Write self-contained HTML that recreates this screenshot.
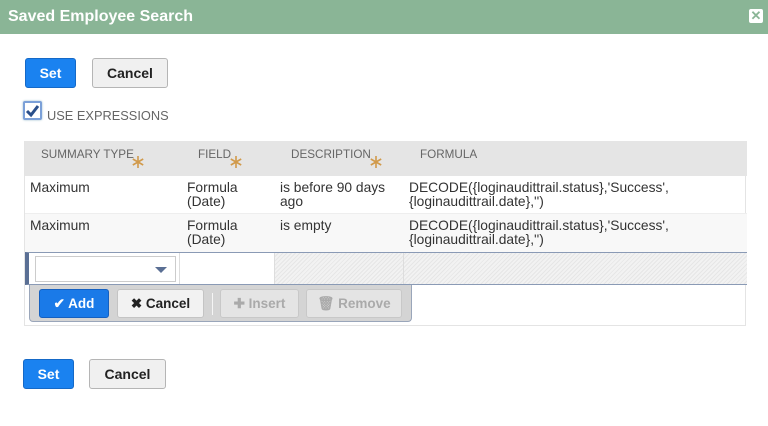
<!DOCTYPE html>
<html><head><style>
*{margin:0;padding:0;box-sizing:border-box}
body{width:768px;height:426px;background:#fff;font-family:"Liberation Sans",Arial,sans-serif;position:relative;overflow:hidden;color:#333}
.hdr{position:absolute;left:0;top:0;width:768px;height:34px;background:#8ab596;color:#fff;font-weight:bold;font-size:16px;padding:8px 0 0 8px}
.x{position:absolute;right:5px;top:9px;width:14px;height:14px;background:#fff;border-radius:2px;color:#8ab596;font-size:13px;line-height:14px;text-align:center;font-weight:bold}
.btn{position:absolute;height:30px;border-radius:3px;font-weight:bold;font-size:14px;text-align:center;line-height:28px}
.set{background:#1a82f0;border:1px solid #1569c7;color:#fff}
.can{background:#f0f0f0;border:1px solid #b5b5b5;color:#222}
.cb{position:absolute;left:23px;top:101px;width:19px;height:19px;border:2px solid #7ba0d8;border-radius:2px;background:#fff;box-shadow:0 0 2px #9bc}
.lbl{position:absolute;left:47px;top:108px;font-size:12.8px;color:#666}
.t{position:absolute;left:24px;top:141px;width:722px;height:185px;border:1px solid #e4e4e4;border-top:none}
.th{position:absolute;top:0;left:0;width:722px;height:35px;background:#e5e5e5}
.h{position:absolute;top:7px;font-size:11.7px;color:#666}
.st{position:absolute;top:15px}
.c{position:absolute;font-size:13.8px;color:#333;line-height:14px}
.r2{position:absolute;left:0;top:72px;width:722px;height:39px;background:#f8f8f8;border-top:1px solid #eee}
.edit{position:absolute;left:0;top:111px;width:722px;height:33px;border-top:1px solid #8a9ab5;border-bottom:1px solid #8a9ab5;border-left:4px solid #5a6f94;background:repeating-linear-gradient(135deg,#f2f2f2 0 2px,#e6e6e6 2px 3px)}
.bar{position:absolute;left:4px;top:144px;width:383px;height:37px;background:#d4d4d4;border:1px solid #9aa6ba;border-top:none;border-radius:0 0 4px 4px}
.sb{position:absolute;top:4px;height:29px;border-radius:3px;font-size:13.5px;font-weight:bold;line-height:27px;text-align:center}
</style></head><body>
<div class="hdr">Saved Employee Search</div><div class="x">✕</div>
<div class="btn set" style="left:25px;top:58px;width:51px">Set</div>
<div class="btn can" style="left:92px;top:58px;width:76px">Cancel</div>
<div class="cb"><svg width="15" height="15" viewBox="0 0 15 15"><path d="M2 8l4 4 7-9" stroke="#2a4f8a" stroke-width="3" fill="none"/></svg></div>
<div class="lbl">USE EXPRESSIONS</div>
<div class="t">
<div class="th"></div>
<svg width="0" height="0" style="position:absolute"><defs><g id="ast" stroke="#d19a4b" stroke-width="1.6"><path d="M6 0v12M0.8 3l10.4 6M0.8 9l10.4-6"/></g></defs></svg>
<div class="h" style="left:16px">SUMMARY TYPE</div><svg class="st" style="left:107px" width="12" height="12"><use href="#ast"/></svg>
<div class="h" style="left:173px">FIELD</div><svg class="st" style="left:205px" width="12" height="12"><use href="#ast"/></svg>
<div class="h" style="left:266px">DESCRIPTION</div><svg class="st" style="left:345px" width="12" height="12"><use href="#ast"/></svg>
<div class="h" style="left:395px">FORMULA</div>
<div class="r2"></div>
<div class="c" style="left:5px;top:40px">Maximum</div>
<div class="c" style="left:162px;top:40px">Formula<br>(Date)</div>
<div class="c" style="left:255px;top:40px">is before 90 days<br>ago</div>
<div class="c" style="left:384px;top:40px">DECODE({loginaudittrail.status},'Success',<br>{loginaudittrail.date},'')</div>
<div class="c" style="left:5px;top:78px">Maximum</div>
<div class="c" style="left:162px;top:78px">Formula<br>(Date)</div>
<div class="c" style="left:255px;top:78px">is empty</div>
<div class="c" style="left:384px;top:78px">DECODE({loginaudittrail.status},'Success',<br>{loginaudittrail.date},'')</div>
<div class="edit">
<div style="position:absolute;left:0;top:0;width:246px;height:31px;background:#fff;border-right:1px solid #ddd"></div>
<div style="position:absolute;left:150px;top:0;width:1px;height:31px;background:#ddd"></div>
<div style="position:absolute;left:374px;top:0;width:1px;height:31px;background:#ddd"></div>
<div style="position:absolute;left:6px;top:3px;width:141px;height:26px;border:1px solid #ccc;background:#fff"><div style="position:absolute;right:8px;top:10px;border-left:6px solid transparent;border-right:6px solid transparent;border-top:6px solid #5a6f94"></div></div>
</div>
<div class="bar">
<div class="sb" style="left:9px;width:70px;background:#1a7ae8;border:1px solid #1560c0;color:#fff">✔ Add</div>
<div class="sb" style="left:87px;width:87px;background:#f2f2f2;border:1px solid #c4c4c4;color:#222">✖ Cancel</div>
<div style="position:absolute;left:182px;top:8px;width:1px;height:22px;background:#f5f5f5"></div>
<div class="sb" style="left:190px;width:79px;background:#e4e4e4;border:1px solid #c8c8c8;color:#aaa">✚ Insert</div>
<div class="sb" style="left:276px;width:96px;background:#e4e4e4;border:1px solid #c8c8c8;color:#aaa">🗑 Remove</div>
</div>
</div>
<div class="btn set" style="left:23px;top:359px;width:51px">Set</div>
<div class="btn can" style="left:89px;top:359px;width:77px">Cancel</div>
</body></html>
